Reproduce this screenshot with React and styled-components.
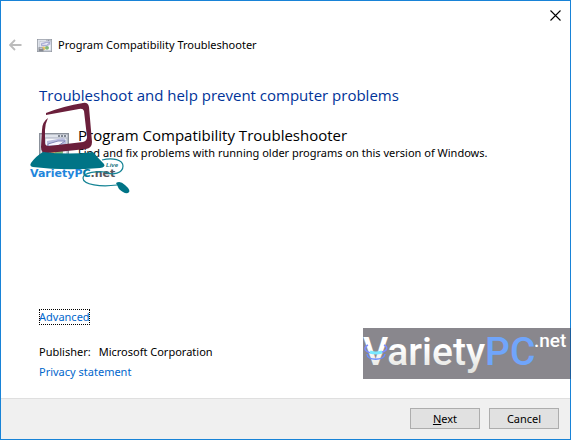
import styled, { createGlobalStyle } from 'styled-components';

const App = () => {
  return (
    <>
      <GlobalStyle />
      <Window>
        <TitleBar>
          <CloseButton type="button" aria-label="Close">
            <svg width="11" height="11" viewBox="0 0 11 11">
              <path d="M0.5 0.5L10.5 10.5M10.5 0.5L0.5 10.5" stroke="#000" strokeWidth="1.1" />
            </svg>
          </CloseButton>
        </TitleBar>
        <Header>
          <BackButton type="button" aria-label="Back" disabled>
            <svg width="13" height="12" viewBox="0 0 13 12" fill="none">
              <path d="M12.5 6H1.5M6 1L1 6L6 11" stroke="#bcbcbc" strokeWidth="1.8" />
            </svg>
          </BackButton>
          <ProgramIcon width={15} height={13} />
          <HeaderTitle>Program Compatibility Troubleshooter</HeaderTitle>
        </Header>
        <Content>
          <Heading>Troubleshoot and help prevent computer problems</Heading>
          <Item>
            <ProgramIcon width={30} height={28} />
            <div>
              <ItemTitle>Program Compatibility Troubleshooter</ItemTitle>
              <ItemText>
                Find and fix problems with running older programs on this version of Windows.
              </ItemText>
            </div>
            <ComputerMark />
          </Item>
          <Details>
            <AdvancedLink href="#advanced">Advanced</AdvancedLink>
            <Publisher>
              <span>Publisher:</span>
              <span>Microsoft Corporation</span>
            </Publisher>
            <TextLink href="#privacy">Privacy statement</TextLink>
          </Details>
          <SiteMark />
        </Content>
        <Footer>
          <FooterButton type="button">
            <u>N</u>ext
          </FooterButton>
          <FooterButton type="button">Cancel</FooterButton>
        </Footer>
      </Window>
    </>
  );
};

export default App;

const ProgramIcon = ({ width, height }) => (
  <IconSvg width={width} height={height} viewBox="0 0 30 28" preserveAspectRatio="none">
    <rect x="0.7" y="0.7" width="28.6" height="26.6" fill="#dfe3eb" stroke="#8b919b" strokeWidth="1.4" />
    <path d="M19 3h2M22 3h2M25 3h2" stroke="#626975" strokeWidth="1.4" />
    <rect x="6" y="5" width="22" height="20" fill="#f8f9fd" stroke="#a7aebd" />
    <path d="M8 8L24 5L27 7V12L20 16H8Z" fill="#b9bdde" />
    <path d="M9 11L19 8H26L19 13H9Z" fill="#f7f6ff" stroke="#8488b8" />
    <circle cx="13" cy="20" r="4" fill="#e8c76a" />
    <circle cx="20" cy="19" r="4" fill="#83b877" />
    <path d="M3 18h7l3 3v6H3Z" fill="#858991" />
    <path d="M5 20h6" stroke="#d8d9dc" strokeWidth="2" />
  </IconSvg>
);

const ComputerMark = () => (
  <ComputerSvg width="104" height="94" viewBox="0 0 104 94">
    <path
      fill="#6b1f3b"
      d="M17 12Q35 5 54 2Q59 1 60 6L63 41Q63 47 57 48L19 52Q12 53 12 46L13 29Q13 21 19 17Q16 23 16 29L16 42Q16 45 20 45L54 41Q58 40 58 36L55 10Q54 7 50 8L17 14Z"
    />
    <path fill="#007486" d="M14 51Q40 54 64 51Q69 57 75 63Q77 66 71 67Q36 70 4 66Q0 65 2 62Q7 55 14 51Z" />
    <MarkText x="1" y="76" fill="#1f86dc">
      VarietyP<tspan fill="#007ba4">C</tspan>
      <tspan fill="#56565c">.net</tspan>
    </MarkText>
    <path
      d="M73 59C84 56 94 59 94 65C94 72 84 75 76 71C70 70 54 71 54 77C54 84 72 86 88 84"
      fill="none"
      stroke="#138394"
      strokeWidth="1.2"
    />
    <path fill="#007486" d="M87 82Q91 79 96 84Q103 90 99 92Q95 93 90 88Z" />
    <LiveText x="77" y="66">Live</LiveText>
  </ComputerSvg>
);

const SiteMark = () => (
  <SiteSvg width="208" height="51" viewBox="0 0 208 51">
    <defs>
      <linearGradient id="whiteText" x1="0" y1="0" x2="0" y2="1">
        <stop offset="0.4" stopColor="#fff" />
        <stop offset="1" stopColor="#deded9" />
      </linearGradient>
    </defs>
    <rect width="208" height="51" fill="#89878d" />
    <SiteText x="0" y="37" $size={39} fill="url(#whiteText)">
      Variety<tspan fill="#70a5fb">PC</tspan>
    </SiteText>
    <SiteText x="171" y="19" $size={19} fill="#fff">.net</SiteText>
    <g fill="none" strokeWidth="1.5">
      <path d="M5 17C-1 20 2 25 12 25C23 25 27 20 21 17" stroke="#7c8cff" />
      <path d="M4 26C4 33 21 33 22 26" stroke="#6a8cff" />
      <path d="M7 24Q13 26 19 24" stroke="#79e9ff" strokeWidth="3" />
    </g>
    <path d="M207.5 0V51" stroke="#1c5d9c" />
  </SiteSvg>
);

const GlobalStyle = createGlobalStyle`
  * {
    box-sizing: border-box;
  }

  body {
    margin: 0;
    font-family: "Noto Sans", "Open Sans", sans-serif;
    font-size: 11px;
    line-height: 16px;
    color: #000;
  }
`;

const Window = styled.main`
  display: flex;
  flex-direction: column;
  min-height: 100vh;
  border: 1px solid #1883d7;
  background-color: #fff;
`;

const TitleBar = styled.div`
  display: flex;
  justify-content: flex-end;
  height: 32px;
`;

const CloseButton = styled.button`
  display: flex;
  align-items: center;
  justify-content: center;
  width: 30px;
  height: 28px;
  padding: 0;
  border: none;
  background: none;
`;

const Header = styled.header`
  display: flex;
  align-items: center;
  height: 24px;
  padding-left: 8px;
`;

const BackButton = styled.button`
  display: flex;
  width: 28px;
  padding: 0;
  border: none;
  background: none;
`;

const HeaderTitle = styled.div`
  margin-left: 6px;
`;

const IconSvg = styled.svg`
  flex: none;
`;

const Content = styled.section`
  position: relative;
  display: flex;
  flex: 1;
  flex-direction: column;
  padding: 28px 38px 18px;
`;

const Heading = styled.h1`
  margin: 0;
  color: #003399;
  font-family: "Open Sans", sans-serif;
  font-size: 15px;
  font-weight: 400;
  line-height: 20px;
`;

const Item = styled.div`
  position: relative;
  display: flex;
  align-items: flex-end;
  gap: 9px;
  margin-top: 20px;
`;

const ItemTitle = styled.h2`
  margin: 0;
  font-family: "Open Sans", sans-serif;
  font-size: 15px;
  font-weight: 400;
  line-height: 20px;
`;

const ItemText = styled.p`
  margin: 0;
`;

const ComputerSvg = styled.svg`
  position: absolute;
  top: -24px;
  left: -10px;
`;

const Details = styled.div`
  display: flex;
  flex-direction: column;
  align-items: flex-start;
  margin-top: auto;
`;

const TextLink = styled.a`
  color: #0066cc;
  text-decoration: none;
`;

const AdvancedLink = styled(TextLink)`
  outline: 1px dotted #000;
  outline-offset: -1px;
`;

const Publisher = styled.div`
  display: flex;
  gap: 8px;
  margin: 19px 0 4px;
`;

const MarkText = styled.text`
  font-family: "DejaVu Sans", sans-serif;
  font-size: 11px;
  font-weight: 700;
`;

const LiveText = styled.text`
  fill: #24747f;
  font-family: "Liberation Sans", sans-serif;
  font-size: 6px;
  font-style: italic;
  font-weight: 700;
`;

const SiteSvg = styled.svg`
  position: absolute;
  right: -1px;
  bottom: 19px;
`;

const SiteText = styled.text`
  font-family: Roboto, sans-serif;
  font-size: ${(props) => props.$size}px;
  font-weight: 500;
`;

const Footer = styled.footer`
  display: flex;
  justify-content: flex-end;
  gap: 9px;
  padding: 9px 11px 10px;
  border-top: 1px solid #dfdfdf;
  background-color: #f0f0f0;
`;

const FooterButton = styled.button`
  width: 70px;
  height: 21px;
  padding: 0;
  border: 1px solid #adadad;
  background-color: #e1e1e1;
  color: #000;
  font: inherit;
`;
